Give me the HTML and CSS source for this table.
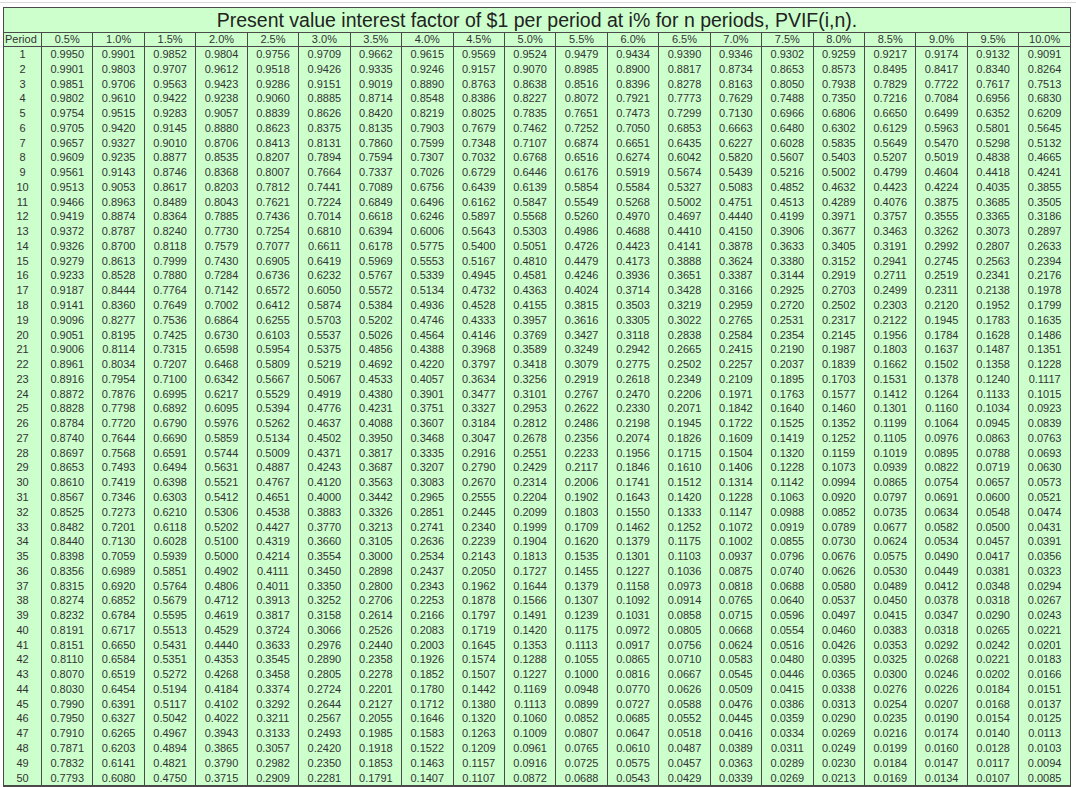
FILE: index.html
```html
<!DOCTYPE html>
<html lang="en">
<head>
<meta charset="utf-8">
<title>PVIF table</title>
<link rel="stylesheet" href="styles.css">
</head>
<body>
<div class="rule"></div>
<table class="pvif">
  <colgroup>
    <col class="col-period">
  </colgroup>
  <thead>
    <tr><th class="title" colspan="21">Present value interest factor of $1 per period at i% for n periods, PVIF(i,n).</th></tr>
    <tr class="head" id="head"><th class="period">Period</th></tr>
  </thead>
  <tbody id="rows"></tbody>
</table>
<script src="app.js"></script>
</body>
</html>
```
FILE: styles.css
```css
html, body {
  margin: 0;
  padding: 0;
  background: #ffffff;
}
body {
  padding-top: 2px;
  font-family: "Liberation Sans", Arial, sans-serif;
  color: #333333;
}
.rule {
  height: 1px;
  background: #d9d9d9;
}
.pvif {
  margin: 4px 0 0 3px;
  width: 1068px;
  table-layout: fixed;
  border-collapse: collapse;
  background: #ccffcc;
  border: 1px solid #4a4a4a;
  border-bottom: 2px solid #4a4a4a;
  font-size: 11px;
}
.col-period {
  width: 38px;
}
.pvif th, .pvif td {
  padding: 0;
  font-weight: normal;
  text-align: center;
  white-space: nowrap;
  overflow: hidden;
}
.title {
  height: 24px;
  font-size: 19.5px;
  line-height: 24px;
  color: #222222;
  border-bottom: 1px solid #4a4a4a;
}
.head th {
  height: 13px;
  line-height: 13px;
  border: 1px solid #4a4a4a;
}
.head th.period {
  text-align: left;
  padding-left: 1px;
}
.pvif td {
  height: 14.76px;
  line-height: 14.76px;
  border-left: 1px solid #4a4a4a;
  border-right: 1px solid #4a4a4a;
}
```
FILE: app.js
```js
(function () {
  var rates = [];
  for (var k = 1; k <= 20; k++) rates.push(k * 0.5);
  var head = document.getElementById('head');
  rates.forEach(function (r) {
    var th = document.createElement('th');
    th.textContent = r.toFixed(1) + '%';
    head.appendChild(th);
  });
  var body = document.getElementById('rows');
  for (var n = 1; n <= 50; n++) {
    var tr = document.createElement('tr');
    var td = document.createElement('td');
    td.textContent = String(n);
    tr.appendChild(td);
    rates.forEach(function (r) {
      var c = document.createElement('td');
      var v = 1 / Math.pow(1 + r / 100, n);
      c.textContent = v.toFixed(4);
      tr.appendChild(c);
    });
    body.appendChild(tr);
  }
})();
```
